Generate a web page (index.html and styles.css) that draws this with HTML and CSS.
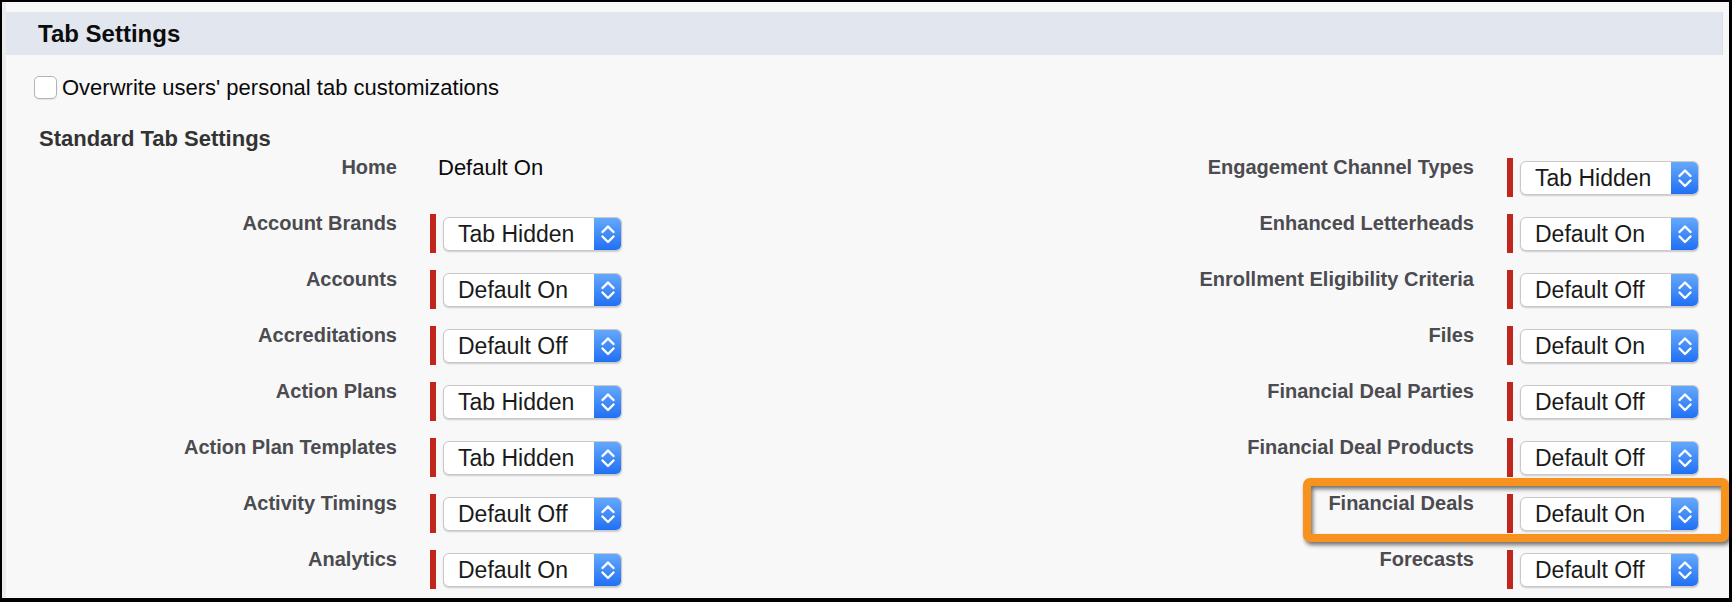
FILE: index.html
```html
<!DOCTYPE html>
<html lang="en">
<head>
<meta charset="utf-8">
<title>Tab Settings</title>
<link rel="stylesheet" href="styles.css">
</head>
<body>
<div class="frame">
  <div class="section">
    <div class="section-head"><h2 class="section-title">Tab Settings</h2></div>
    <label class="overwrite"><span class="checkbox"></span><span>Overwrite users' personal tab customizations</span></label>
    <h3 class="sub-head">Standard Tab Settings</h3>
    <div class="tab-grid">
      <div class="label">Home</div>
      <div class="data plain">Default On</div>
      <div class="label">Engagement Channel Types</div>
      <div class="data"><span class="req"></span><span class="select"><span class="select-text">Tab Hidden</span><span class="arrows"><svg viewBox="0 0 28 34" width="28" height="34"><path d="M8.5 15 14 9.5 19.5 15M8.5 19.5 14 25 19.5 19.5" fill="none" stroke="#fff" stroke-width="2.4" stroke-linecap="round" stroke-linejoin="round"/></svg></span></span></div>

      <div class="label">Account Brands</div>
      <div class="data"><span class="req"></span><span class="select"><span class="select-text">Tab Hidden</span><span class="arrows"><svg viewBox="0 0 28 34" width="28" height="34"><path d="M8.5 15 14 9.5 19.5 15M8.5 19.5 14 25 19.5 19.5" fill="none" stroke="#fff" stroke-width="2.4" stroke-linecap="round" stroke-linejoin="round"/></svg></span></span></div>
      <div class="label">Enhanced Letterheads</div>
      <div class="data"><span class="req"></span><span class="select"><span class="select-text">Default On</span><span class="arrows"><svg viewBox="0 0 28 34" width="28" height="34"><path d="M8.5 15 14 9.5 19.5 15M8.5 19.5 14 25 19.5 19.5" fill="none" stroke="#fff" stroke-width="2.4" stroke-linecap="round" stroke-linejoin="round"/></svg></span></span></div>

      <div class="label">Accounts</div>
      <div class="data"><span class="req"></span><span class="select"><span class="select-text">Default On</span><span class="arrows"><svg viewBox="0 0 28 34" width="28" height="34"><path d="M8.5 15 14 9.5 19.5 15M8.5 19.5 14 25 19.5 19.5" fill="none" stroke="#fff" stroke-width="2.4" stroke-linecap="round" stroke-linejoin="round"/></svg></span></span></div>
      <div class="label">Enrollment Eligibility Criteria</div>
      <div class="data"><span class="req"></span><span class="select"><span class="select-text">Default Off</span><span class="arrows"><svg viewBox="0 0 28 34" width="28" height="34"><path d="M8.5 15 14 9.5 19.5 15M8.5 19.5 14 25 19.5 19.5" fill="none" stroke="#fff" stroke-width="2.4" stroke-linecap="round" stroke-linejoin="round"/></svg></span></span></div>

      <div class="label">Accreditations</div>
      <div class="data"><span class="req"></span><span class="select"><span class="select-text">Default Off</span><span class="arrows"><svg viewBox="0 0 28 34" width="28" height="34"><path d="M8.5 15 14 9.5 19.5 15M8.5 19.5 14 25 19.5 19.5" fill="none" stroke="#fff" stroke-width="2.4" stroke-linecap="round" stroke-linejoin="round"/></svg></span></span></div>
      <div class="label">Files</div>
      <div class="data"><span class="req"></span><span class="select"><span class="select-text">Default On</span><span class="arrows"><svg viewBox="0 0 28 34" width="28" height="34"><path d="M8.5 15 14 9.5 19.5 15M8.5 19.5 14 25 19.5 19.5" fill="none" stroke="#fff" stroke-width="2.4" stroke-linecap="round" stroke-linejoin="round"/></svg></span></span></div>

      <div class="label">Action Plans</div>
      <div class="data"><span class="req"></span><span class="select"><span class="select-text">Tab Hidden</span><span class="arrows"><svg viewBox="0 0 28 34" width="28" height="34"><path d="M8.5 15 14 9.5 19.5 15M8.5 19.5 14 25 19.5 19.5" fill="none" stroke="#fff" stroke-width="2.4" stroke-linecap="round" stroke-linejoin="round"/></svg></span></span></div>
      <div class="label">Financial Deal Parties</div>
      <div class="data"><span class="req"></span><span class="select"><span class="select-text">Default Off</span><span class="arrows"><svg viewBox="0 0 28 34" width="28" height="34"><path d="M8.5 15 14 9.5 19.5 15M8.5 19.5 14 25 19.5 19.5" fill="none" stroke="#fff" stroke-width="2.4" stroke-linecap="round" stroke-linejoin="round"/></svg></span></span></div>

      <div class="label">Action Plan Templates</div>
      <div class="data"><span class="req"></span><span class="select"><span class="select-text">Tab Hidden</span><span class="arrows"><svg viewBox="0 0 28 34" width="28" height="34"><path d="M8.5 15 14 9.5 19.5 15M8.5 19.5 14 25 19.5 19.5" fill="none" stroke="#fff" stroke-width="2.4" stroke-linecap="round" stroke-linejoin="round"/></svg></span></span></div>
      <div class="label">Financial Deal Products</div>
      <div class="data"><span class="req"></span><span class="select"><span class="select-text">Default Off</span><span class="arrows"><svg viewBox="0 0 28 34" width="28" height="34"><path d="M8.5 15 14 9.5 19.5 15M8.5 19.5 14 25 19.5 19.5" fill="none" stroke="#fff" stroke-width="2.4" stroke-linecap="round" stroke-linejoin="round"/></svg></span></span></div>

      <div class="label">Activity Timings</div>
      <div class="data"><span class="req"></span><span class="select"><span class="select-text">Default Off</span><span class="arrows"><svg viewBox="0 0 28 34" width="28" height="34"><path d="M8.5 15 14 9.5 19.5 15M8.5 19.5 14 25 19.5 19.5" fill="none" stroke="#fff" stroke-width="2.4" stroke-linecap="round" stroke-linejoin="round"/></svg></span></span></div>
      <div class="label">Financial Deals</div>
      <div class="data"><span class="req"></span><span class="select"><span class="select-text">Default On</span><span class="arrows"><svg viewBox="0 0 28 34" width="28" height="34"><path d="M8.5 15 14 9.5 19.5 15M8.5 19.5 14 25 19.5 19.5" fill="none" stroke="#fff" stroke-width="2.4" stroke-linecap="round" stroke-linejoin="round"/></svg></span></span></div>

      <div class="label">Analytics</div>
      <div class="data"><span class="req"></span><span class="select"><span class="select-text">Default On</span><span class="arrows"><svg viewBox="0 0 28 34" width="28" height="34"><path d="M8.5 15 14 9.5 19.5 15M8.5 19.5 14 25 19.5 19.5" fill="none" stroke="#fff" stroke-width="2.4" stroke-linecap="round" stroke-linejoin="round"/></svg></span></span></div>
      <div class="label">Forecasts</div>
      <div class="data"><span class="req"></span><span class="select"><span class="select-text">Default Off</span><span class="arrows"><svg viewBox="0 0 28 34" width="28" height="34"><path d="M8.5 15 14 9.5 19.5 15M8.5 19.5 14 25 19.5 19.5" fill="none" stroke="#fff" stroke-width="2.4" stroke-linecap="round" stroke-linejoin="round"/></svg></span></span></div>
    </div>
  </div>
</div>
<div class="highlight"></div>
</body>
</html>
```

FILE: styles.css
```css
* {
  box-sizing: border-box;
}

html, body {
  margin: 0;
  padding: 0;
}

body {
  position: relative;
  width: 1732px;
  height: 602px;
  overflow: hidden;
  background: #000;
  font-family: "Liberation Sans", Arial, Helvetica, sans-serif;
}

.frame {
  margin: 2px 3px 0 2px;
  height: 596px;
  overflow: hidden;
  background: #f8f8f8;
  border-left: 4px solid #ebebeb;
  padding-top: 10px;
}

.section {
  margin-right: 6px;
}

.section-head {
  height: 43px;
  background: #e2e6ee;
  border-right: 1px solid #d8dce4;
  display: flex;
  align-items: center;
  padding-left: 32px;
}

.section-title {
  margin: 0;
  font-size: 24px;
  line-height: 43px;
  font-weight: bold;
  color: #0c0c0c;
}

.overwrite {
  display: flex;
  align-items: center;
  margin: 21px 0 0 28px;
  height: 23px;
  font-size: 22px;
  color: #0a0a0a;
  gap: 5px;
}

.checkbox {
  width: 23px;
  height: 23px;
  border: 1px solid #b3b3b3;
  border-radius: 5px;
  background: #fff;
  box-shadow: 0 1px 1px rgba(0, 0, 0, 0.08);
  flex: none;
}

.sub-head {
  margin: 29px 0 0 33px;
  font-size: 22px;
  line-height: 22px;
  font-weight: bold;
  color: #333;
}

.tab-grid {
  margin-top: 8px;
  display: grid;
  grid-template-columns: 391px 686px 391px 1fr;
  grid-auto-rows: 56px;
}

.label {
  text-align: right;
  font-size: 20px;
  line-height: 20px;
  font-weight: bold;
  color: #4b4b50;
  margin-top: -1px;
}

.data {
  display: flex;
  align-items: flex-start;
  padding-left: 33px;
}

.data.plain {
  padding-left: 41px;
  font-size: 22px;
  line-height: 22px;
  margin-top: -1px;
  color: #0a0a0a;
}

.req {
  width: 6px;
  height: 39px;
  background: #c0261c;
  flex: none;
}

.select {
  margin: 3px 0 0 7px;
  width: 179px;
  height: 34px;
  display: flex;
  align-items: stretch;
  background: #fff;
  border: 1px solid #c9c9c9;
  border-radius: 6px;
  box-shadow: 0 1px 1.5px rgba(0, 0, 0, 0.18);
  overflow: hidden;
}

.select-text {
  flex: 1;
  padding-left: 14px;
  font-size: 23px;
  line-height: 32px;
  color: #1a1a1a;
  white-space: nowrap;
}

.arrows {
  width: 28px;
  margin: -1px -1px -1px 0;
  background: linear-gradient(#67aafc, #1f6ef4);
  display: flex;
  align-items: center;
  justify-content: center;
}

.arrows svg {
  display: block;
}

.highlight {
  position: absolute;
  left: 1303px;
  top: 478px;
  width: 426px;
  height: 64px;
  border: 8px solid #f7921e;
  border-radius: 7px;
  filter: drop-shadow(2px 3px 2px rgba(0, 0, 0, 0.55));
}
```
